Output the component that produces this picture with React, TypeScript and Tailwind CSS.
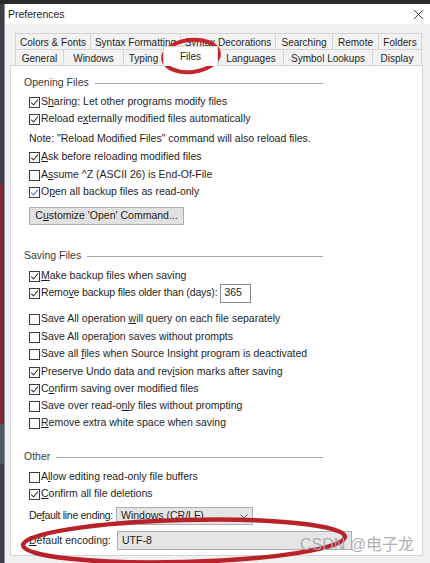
import React from "react"

const font = "font-['Liberation_Sans',Arial,sans-serif]"

const Box = ({ checked, blue }: { checked?: boolean; blue?: boolean }) => (
  <span className="flex h-[11px] w-[11px] shrink-0 items-center justify-center border border-[#3c3c3c] bg-white">
    {checked && (
      <svg width="9" height="9" viewBox="0 0 9 9">
        <path d="M1.2 4.6 L3.5 7 L7.9 1.6" fill="none" stroke={blue ? "#4a7fb5" : "#3a3a3a"} strokeWidth="1.1" />
      </svg>
    )}
  </span>
)

const Check = ({ checked, blue, className = "", children }: { checked?: boolean; blue?: boolean; className?: string; children: React.ReactNode }) => (
  <div className={"ml-[5px] flex h-[16px] items-center gap-[1px] " + className}>
    <Box checked={checked} blue={blue} />
    <span className="whitespace-nowrap">{children}</span>
  </div>
)

const Header = ({ title, className = "" }: { title: string; className?: string }) => (
  <div className={"flex h-[16px] w-[299px] items-center gap-[6px] text-[#3a3a3a] " + className}>
    <span className="whitespace-nowrap">{title}</span>
    <div className="h-px flex-1 bg-[#a8a8a8]" />
  </div>
)

const row1 = [
  { t: "Colors & Fonts", w: "w-[75px]" },
  { t: "Syntax Formatting", w: "w-[90px]" },
  { t: "Syntax Decorations", w: "w-[95px]" },
  { t: "Searching", w: "w-[57px]" },
  { t: "Remote", w: "w-[46px]" },
  { t: "Folders", w: "w-[44px] border-r" },
]

const row2 = [
  { t: "General", w: "w-[48px]" },
  { t: "Windows", w: "w-[60px]" },
  { t: "Typing", w: "w-[40px]" },
  { t: "Files", w: "w-[55px]", sel: true },
  { t: "Languages", w: "w-[65px]" },
  { t: "Symbol Lookups", w: "w-[89px]" },
  { t: "Display", w: "w-[50px] border-r" },
]

export default function App() {
  return (
    <div className={`relative h-[563px] w-[430px] overflow-hidden bg-[#2d2d2d] text-[10.5px] text-[#1e1e1e] ${font}`}>
      <div className="h-[4px] bg-[#2a2a2a]" />
      <div className="flex h-[559px]">
        {/* bit of the editor behind the dialog */}
        <div className="flex w-[4px] flex-col bg-[#3b3f45]">
          <div className="h-[180px]" />
          <div className="h-[240px] bg-[#7a2a36]" />
          <div className="h-[40px] bg-[#4d5866]" />
        </div>

        <div className="flex flex-1 flex-col border-l border-[#8a9099] bg-[#f0f0f0]">
          <div className="flex h-[20px] items-center justify-between bg-white pl-[3px] pr-[6px] pt-[1px]">
            <span>Preferences</span>
            <svg width="11" height="11" viewBox="0 0 11 11">
              <path d="M1 1 L10 10 M10 1 L1 10" stroke="#444" strokeWidth="1" />
            </svg>
          </div>

          <div className="flex flex-1 flex-col pl-[5px] pt-[9px]">
            <div className="ml-[5px] flex h-[16px] text-[10px]">
              {row1.map((t) => (
                <div key={t.t} className={`flex items-center justify-center border-l border-t border-[#d4d4d4] bg-[#f2f2f2] pt-[1px] whitespace-nowrap ${t.w}`}>
                  {t.t}
                </div>
              ))}
            </div>
            <div className="ml-[5px] flex h-[16px] items-end text-[10px]">
              {row2.map((t) =>
                t.sel ? (
                  <div key={t.t} className={`relative z-10 -mb-px flex h-[20px] items-start justify-center border-l border-r border-t border-[#d4d4d4] bg-white pt-[2px] ${t.w}`}>
                    {t.t}
                  </div>
                ) : (
                  <div key={t.t} className={`flex h-[16px] items-center justify-center border-l border-t border-[#d4d4d4] bg-[#f2f2f2] pt-[1px] whitespace-nowrap ${t.w}`}>
                    {t.t}
                  </div>
                )
              )}
            </div>

            <div className="flex h-[491px] w-[413px] flex-col border border-[#d4d4d4] bg-white pl-[13px] pt-[9px]">
              <Header title="Opening Files" />
              <Check checked className="mt-[3px]">S<u>h</u>aring: Let other programs modify files</Check>
              <Check checked className="mt-[1px]">Reload e<u>x</u>ternally modified files automatically</Check>
              <div className="ml-[5px] mt-[4px] flex h-[16px] items-center">Note: "Reload Modified Files" command will also reload files.</div>
              <Check checked className="mt-[2px]"><u>A</u>sk before reloading modified files</Check>
              <Check className="mt-[2px]">A<u>s</u>sume ^Z (ASCII 26) is End-Of-File</Check>
              <Check checked blue className="mt-[1px]">O<u>p</u>en all backup files as read-only</Check>
              <button className="ml-[5px] mt-[7px] flex h-[18px] w-[155px] items-center justify-center border border-[#adadad] bg-[#e1e1e1]">
                C<u>u</u>stomize 'Open' Command...
              </button>

              <Header title="Saving Files" className="mt-[23px]" />
              <Check checked className="mt-[4px]"><u>M</u>ake backup files when saving</Check>
              <div className="ml-[5px] mt-[1px] flex h-[16px] items-center gap-[1px]">
                <Box checked />
                <span className="whitespace-nowrap tracking-[-0.15px]">Remo<u>v</u>e backup files older than (days):</span>
                <div className="ml-[2px] flex h-[19px] w-[31px] shrink-0 items-center border border-[#8a8a8a] bg-white pl-[3px]">365</div>
              </div>
              <Check className="mt-[10px]">Save All operation <u>w</u>ill query on each file separately</Check>
              <Check className="mt-[2px]">Save All opera<u>t</u>ion saves without prompts</Check>
              <Check className="mt-[1px]">Save all <u>f</u>iles when Source Insight program is deactivated</Check>
              <Check checked className="mt-[2px]">Preserve Undo data and rev<u>i</u>sion marks after saving</Check>
              <Check checked className="mt-[1px]">C<u>o</u>nfirm saving over modified files</Check>
              <Check className="mt-[1px]">Save over read-o<u>nl</u>y files without prompting</Check>
              <Check className="mt-[1px]"><u>R</u>emove extra white space when saving</Check>

              <Header title="Other" className="mt-[18px]" />
              <Check className="mt-[4px]">A<u>l</u>low editing read-only file buffers</Check>
              <Check checked className="mt-[1px]"><u>C</u>onfirm all file deletions</Check>
              <div className="ml-[5px] mt-[5px] flex h-[18px] items-center">
                <span className="w-[87px] whitespace-nowrap tracking-[-0.3px]">De<u>f</u>ault line ending:</span>
                <div className="flex h-[18px] w-[137px] items-center justify-between border border-[#adadad] bg-[#e5e5e5] pl-[4px] pr-[4px]">
                  <span>Windows (CR/LF)</span>
                  <svg width="8" height="5" viewBox="0 0 8 5">
                    <path d="M0.5 0.5 L4 4 L7.5 0.5" fill="none" stroke="#555" strokeWidth="1" />
                  </svg>
                </div>
              </div>
              <div className="ml-[5px] mt-[6px] flex h-[19px] items-center">
                <span className="w-[88px] whitespace-nowrap"><u>D</u>efault encoding:</span>
                <div className="flex h-[19px] w-[235px] items-center border border-[#adadad] bg-[#e5e5e5] pl-[4px]">UTF-8</div>
              </div>
            </div>
          </div>
        </div>
      </div>

      {/* red marker annotations */}
      <svg className="pointer-events-none absolute inset-0" width="430" height="563" viewBox="0 0 430 563">
        <ellipse cx="191" cy="56" rx="28" ry="16" fill="none" stroke="#c1272d" strokeWidth="4" transform="rotate(-6 191 56)" />
        <ellipse cx="184" cy="541" rx="161" ry="21" fill="none" stroke="#b8232b" strokeWidth="4.5" transform="rotate(-1.5 184 541)" />
      </svg>

      <div className="pointer-events-none absolute left-[300px] top-[533px] whitespace-nowrap font-['Liberation_Sans','Noto_Sans_CJK_SC',sans-serif] text-[16px] text-[#a9a9a9] opacity-90">
        CSDN @电子龙
      </div>
    </div>
  )
}
